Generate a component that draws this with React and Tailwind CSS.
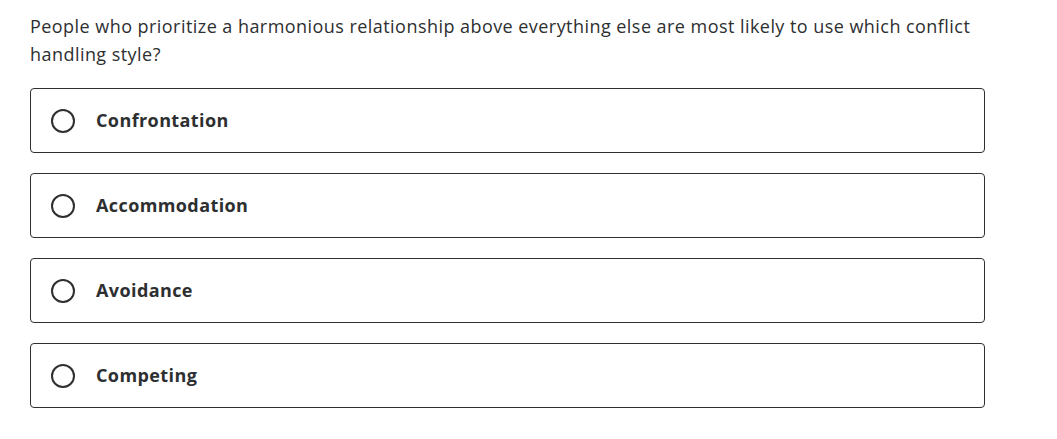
const options = ["Confrontation", "Accommodation", "Avoidance", "Competing"];

export default function App() {
  return (
    <div className="bg-white w-[1057px] h-[439px] px-[30px] pt-[12px] text-[#2d2f31]" style={{ fontFamily: "'Open Sans', 'Noto Sans', sans-serif" }}>
      <p className="text-[18px] leading-[28px] tracking-[0.45px] w-[955px]">
        People who prioritize a harmonious relationship above everything else are most likely to use which conflict handling style?
      </p>

      <div className="mt-[20px] flex flex-col gap-[20px] w-[955px]">
        {options.map((o) => (
          <label key={o} className="h-[65px] border border-[#2d2f31] rounded-[4px] flex items-center pl-[20px] cursor-pointer">
            <span className="w-[24px] h-[24px] rounded-full border-2 border-[#2d2f31] shrink-0"></span>
            <span className="ml-[21px] text-[18px] font-bold tracking-[0.4px]">{o}</span>
          </label>
        ))}
      </div>
    </div>
  );
}
